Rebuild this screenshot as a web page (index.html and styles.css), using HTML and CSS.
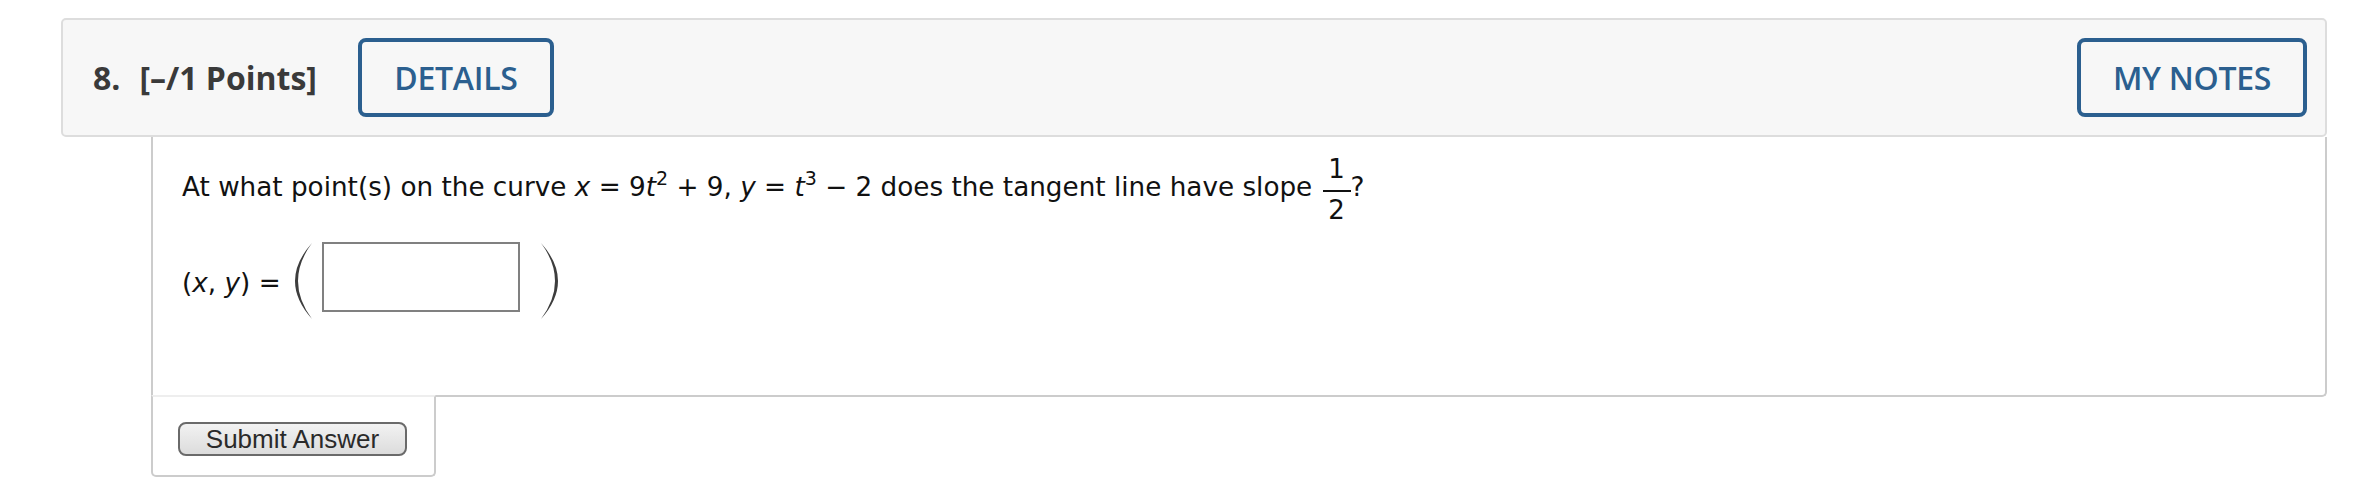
FILE: index.html
```html
<!DOCTYPE html>
<html>
<head>
<meta charset="utf-8">
<link rel="stylesheet" href="styles.css">
</head>
<body>
<div class="wrap">
  <div class="header">
    <span class="qnum">8.</span>
    <span class="points">[–/1 Points]</span>
    <button class="hbtn details">DETAILS</button>
    <span class="spacer"></span>
    <button class="hbtn notes">MY NOTES</button>
  </div>
  <div class="content">
    <p class="question">At what point(s) on the curve <i>x</i> = 9<i>t</i><sup>2</sup> + 9, <i>y</i> = <i>t</i><sup>3</sup> − 2 does the tangent line have slope <span class="frac"><span class="num">1</span><span class="den">2</span></span>?</p>
    <div class="answer">
      <span class="label">(<i>x</i>, <i>y</i>) =</span>
      <svg class="paren" width="20" height="78" viewBox="0 0 20 78"><path d="M18 1 Q -16 39 18 77 Q -10 39 18 1 Z" fill="#3d3d3d"/></svg>
      <span class="box"></span>
      <svg class="paren right" width="20" height="78" viewBox="0 0 20 78"><path d="M2 1 Q 36 39 2 77 Q 30 39 2 1 Z" fill="#3d3d3d"/></svg>
    </div>
  </div>
  <div class="submit">
    <button class="sbtn">Submit Answer</button>
  </div>
</div>
</body>
</html>
```
FILE: styles.css
```css
html, body {
  margin: 0;
  padding: 0;
  background: #ffffff;
}
.wrap {
  margin: 18px 0 0 61px;
  width: 2266px;
}
.header {
  box-sizing: border-box;
  height: 119px;
  background: #f7f7f7;
  border: 2px solid #dddddd;
  border-radius: 5px;
  display: flex;
  align-items: center;
  padding: 0 18px 0 30px;
  font-family: "Open Sans", sans-serif;
}
.qnum {
  font-weight: 700;
  font-size: 32px;
  color: #3a3a3a;
  margin-right: 19px;
}
.points {
  font-weight: 700;
  font-size: 32px;
  color: #3a3a3a;
  margin-right: 41px;
}
.spacer {
  flex: 1;
}
.hbtn {
  box-sizing: border-box;
  height: 79px;
  background: #f7f7f7;
  border: 4px solid #2b5f8f;
  border-radius: 8px;
  color: #2b5f8f;
  font-family: "Open Sans", sans-serif;
  font-size: 32px;
  font-weight: 600;
  letter-spacing: -0.3px;
  padding: 0;
  margin: 0;
}
.details {
  width: 196px;
}
.notes {
  width: 230px;
}
.content {
  box-sizing: border-box;
  margin-left: 90px;
  height: 260px;
  border: 2px solid #cccccc;
  border-top: none;
  border-radius: 0 0 5px 0;
  padding: 19px 0 0 29px;
  font-family: "DejaVu Sans", Verdana, sans-serif;
  color: #111111;
}
.question {
  margin: 0;
  font-size: 26.25px;
  line-height: 30px;
}
.question i {
  font-style: italic;
}
.question sup {
  font-size: 19px;
  line-height: 0;
  vertical-align: 11px;
}
.frac {
  display: inline-flex;
  flex-direction: column;
  align-items: center;
  vertical-align: 18px;
  font-size: 26px;
  line-height: 26px;
  margin-left: 2px;
}
.num {
  display: block;
  width: 28px;
  padding-bottom: 8px;
  text-align: center;
  border-bottom: 2px solid #111111;
}
.den {
  display: block;
  padding-top: 5px;
}
.answer {
  display: flex;
  align-items: flex-start;
  margin-top: 19px;
  font-size: 26.25px;
  line-height: 30px;
}
.label {
  margin: 26px 13px 0 0;
}
.paren {
  display: block;
}
.box {
  display: block;
  box-sizing: border-box;
  width: 198px;
  height: 70px;
  border: 2px solid #808080;
  background: #ffffff;
  margin: 0 19px 0 8px;
}
.submit {
  box-sizing: border-box;
  margin: -2px 0 0 90px;
  width: 285px;
  height: 82px;
  background: #ffffff;
  border: 2px solid #cccccc;
  border-top: 2px solid #eeeeee;
  border-radius: 0 0 5px 5px;
  padding: 25px 0 0 25px;
}
.sbtn {
  display: block;
  box-sizing: border-box;
  width: 229px;
  height: 34px;
  margin: 0;
  padding: 0;
  border: 2px solid #6a6a6a;
  border-radius: 8px;
  background: linear-gradient(#f2f2f2, #dcdcdc);
  color: #2a2a2a;
  font-family: "Liberation Sans", Arial, sans-serif;
  font-size: 26px;
  line-height: 30px;
}
```
